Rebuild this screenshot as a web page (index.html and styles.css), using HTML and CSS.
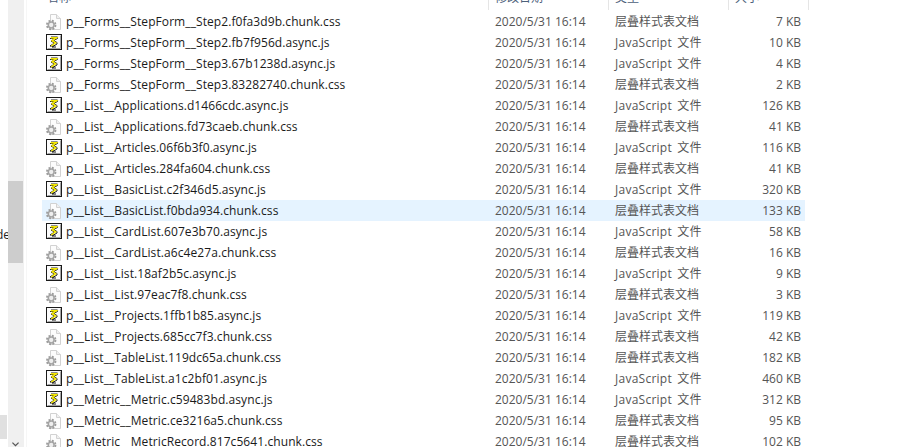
FILE: index.html
```html
<!DOCTYPE html>
<html lang="zh-CN">
<head>
<meta charset="utf-8">
<title>文件列表</title>
<link rel="stylesheet" href="styles.css">
</head>
<body>
<svg class="defs" width="0" height="0" aria-hidden="true">
  <symbol id="js" viewBox="0 0 16 16">
    <rect x="0.5" y="0.5" width="15" height="15" fill="#fbfbfb" stroke="#1a1a1a"/>
    <path d="M14.5 1.5V14.5H1.5" fill="none" stroke="#a5a5a5"/>
    <path d="M5 3H11.5V4.5L7.5 6.5 11 8.5V10L6 13H10" fill="none" stroke="#1c1c1c" stroke-width="1"/>
    <path d="M4 4.5H9L5 7 8.5 9 4 12H8" fill="none" stroke="#1c1c1c" stroke-width="1"/>
    <path d="M4.8 3.7H10.3L6.2 6.6 9.6 8.8 5.3 12" fill="none" stroke="#f5e800" stroke-width="1.5"/>
  </symbol>
  <symbol id="css" viewBox="0 0 16 18">
    <path d="M4.5 1.5H10.5L14.5 5.5V16.5H4.5Z" fill="#fcfcfc" stroke="#d2d2d2"/>
    <path d="M10.5 1.5V5.5H14.5" fill="#efefef" stroke="#d2d2d2"/>
    <circle cx="5.2" cy="12" r="4.3" fill="none" stroke="#9c9c9c" stroke-width="1.8" stroke-dasharray="1.9 1.5"/>
    <circle cx="5.2" cy="12" r="2.9" fill="#eeeeee" stroke="#a4a4a4" stroke-width="1.5"/>
  </symbol>
</svg>
<div class="window">
  <aside class="side">
    <span class="side-text">de</span>
    <div class="side-item"></div>
    <div class="track">
      <div class="track-gap"></div>
      <div class="thumb"></div>
      <div class="track-end"><svg width="7" height="5" viewBox="0 0 7 5"><path d="M.4.6l3.1 3.1L6.6.6" fill="none" stroke="#555" stroke-width="1.3"/></svg></div>
    </div>
  </aside>
  <main class="pane">
    <div class="head">
      <div class="c-name h"><span class="label">名称</span></div>
      <div class="c-date h"><span class="label">修改日期</span></div>
      <div class="c-type h"><span class="label">类型</span></div>
      <div class="c-size h"><span class="label">大小</span></div>
    </div>
    <div class="list" id="list"></div>
  </main>
</div>
<script src="app.js"></script>
</body>
</html>
```
FILE: styles.css
```css
* { box-sizing: border-box; }
html, body { margin: 0; padding: 0; height: 447px; overflow: hidden; background: #fff; }
body { font-family: "Noto Sans CJK SC", sans-serif; font-size: 12px; color: #1a1a1a; }
.defs { position: absolute; }
.window { display: flex; height: 447px; overflow: hidden; }
.side { width: 42px; flex: none; position: relative; display: flex; padding-left: 8px; }
.side-text { position: absolute; left: -4px; top: 227px; font: 12px/16px "Open Sans", sans-serif; color: #222; }
.side-item { position: absolute; left: 0; top: 415px; width: 7px; height: 24px; background: #e0e0e0; }
.track { position: relative; width: 16px; height: 447px; background: #f0f0f0; display: flex; flex-direction: column; border-right: 1px solid #f0f0f0; box-shadow: 2px 0 0 #fff, 3px 0 0 #f6f6f6; }
.track-gap { height: 181px; flex: none; }
.thumb { height: 82px; background: #cdcdcd; flex: none; }
.track-end { margin-top: auto; height: 5px; display: flex; align-items: flex-start; justify-content: center; }
.pane { flex: 1; min-width: 0; }
.head { display: flex; height: 10px; overflow: hidden; }
.h { height: 10px; color: #4c607a; border-right: 1px solid #e5e5e5; }
.label { display: block; line-height: 12px; margin-top: -9px; }
.c-name { width: 447px; padding-left: 5px; flex: none; }
.c-date { width: 120px; padding-left: 6px; flex: none; }
.c-type { width: 120px; padding-left: 6px; flex: none; }
.c-size { width: 80px; padding-left: 6px; flex: none; }
.list { margin-top: 1px; }
.row { display: flex; height: 21px; width: 763px; align-items: center; font: 12px/21px "Open Sans", "Noto Sans CJK SC", sans-serif; color: #555; }
.row.sel { background: #e5f3ff; }
.name { color: #1a1a1a; display: flex; align-items: center; letter-spacing: .08px; }
.name.c-name { padding-left: 4px; }
.ic { width: 16px; height: 16px; margin: 0 4px 1px 0; flex: none; }
.ic.css { height: 18px; margin-bottom: 0; }
.type-js { letter-spacing: .25px; word-spacing: 2px; }
.c-size.val { width: 76px; text-align: right; padding-right: 4px; }
```
FILE: app.js
```js
const rows = [
["p__Forms__StepForm__Step2.f0fa3d9b.chunk.css",7],
["p__Forms__StepForm__Step2.fb7f956d.async.js",10],
["p__Forms__StepForm__Step3.67b1238d.async.js",4],
["p__Forms__StepForm__Step3.83282740.chunk.css",2],
["p__List__Applications.d1466cdc.async.js",126],
["p__List__Applications.fd73caeb.chunk.css",41],
["p__List__Articles.06f6b3f0.async.js",116],
["p__List__Articles.284fa604.chunk.css",41],
["p__List__BasicList.c2f346d5.async.js",320],
["p__List__BasicList.f0bda934.chunk.css",133],
["p__List__CardList.607e3b70.async.js",58],
["p__List__CardList.a6c4e27a.chunk.css",16],
["p__List__List.18af2b5c.async.js",9],
["p__List__List.97eac7f8.chunk.css",3],
["p__List__Projects.1ffb1b85.async.js",119],
["p__List__Projects.685cc7f3.chunk.css",42],
["p__List__TableList.119dc65a.chunk.css",182],
["p__List__TableList.a1c2bf01.async.js",460],
["p__Metric__Metric.c59483bd.async.js",312],
["p__Metric__Metric.ce3216a5.chunk.css",95],
["p__Metric__MetricRecord.817c5641.chunk.css",102]
];
const list = document.getElementById("list");
rows.forEach(([name, kb], i) => {
  const js = name.endsWith(".js");
  const row = document.createElement("div");
  row.className = "row" + (i === 9 ? " sel" : "");
  row.innerHTML =
    `<div class="c-name name"><svg class="ic ${js ? "js" : "css"}"><use href="#${js ? "js" : "css"}"/></svg><span>${name}</span></div>` +
    `<div class="c-date">2020/5/31 16:14</div>` +
    `<div class="c-type${js ? " type-js" : ""}">${js ? "JavaScript 文件" : "层叠样式表文档"}</div>` +
    `<div class="c-size val">${kb} KB</div>`;
  list.appendChild(row);
});
```
